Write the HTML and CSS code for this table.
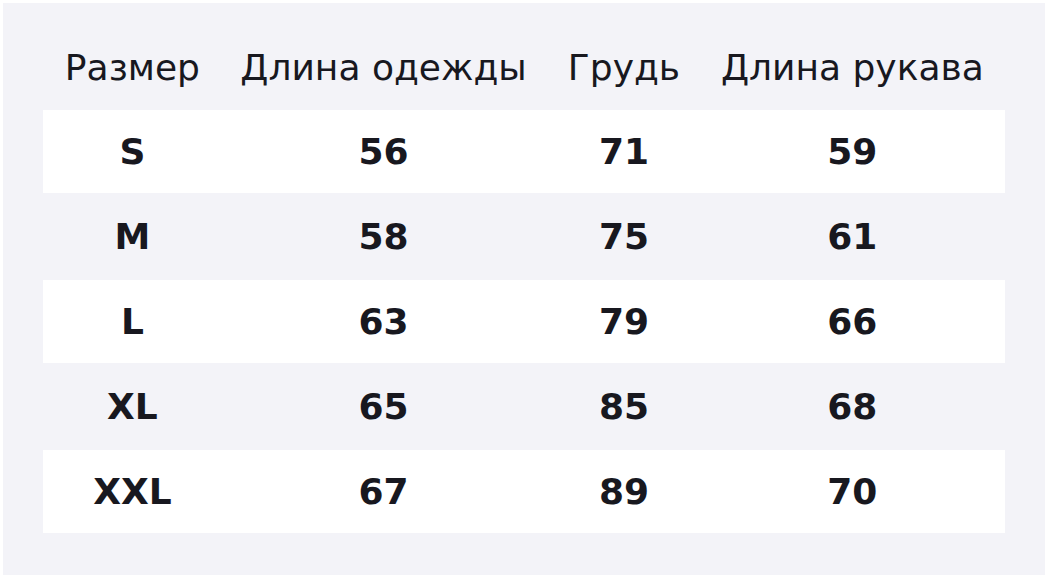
FILE: index.html
```html
<!DOCTYPE html>
<html lang="ru">
<head>
<meta charset="utf-8">
<link rel="stylesheet" href="styles.css">
</head>
<body>
<div class="panel">
  <table class="sizes">
    <thead>
      <tr><th>Размер</th><th>Длина одежды</th><th>Грудь</th><th>Длина рукава</th></tr>
    </thead>
    <tbody>
      <tr class="light"><td>S</td><td>56</td><td>71</td><td>59</td></tr>
      <tr class="dark"><td>M</td><td>58</td><td>75</td><td>61</td></tr>
      <tr class="light"><td>L</td><td>63</td><td>79</td><td>66</td></tr>
      <tr class="dark"><td>XL</td><td>65</td><td>85</td><td>68</td></tr>
      <tr class="light"><td>XXL</td><td>67</td><td>89</td><td>70</td></tr>
    </tbody>
  </table>
</div>
</body>
</html>
```

FILE: styles.css
```css
html, body {
  margin: 0;
  padding: 0;
  background: #ffffff;
}
body {
  width: 1048px;
  height: 578px;
  padding: 3px;
  box-sizing: border-box;
}
.panel {
  width: 1042px;
  height: 572px;
  box-sizing: border-box;
  background: #f3f3f8;
  padding: 21px 40px 0 40px;
}
.sizes {
  width: 962px;
  border-collapse: collapse;
  font-family: "DejaVu Sans", sans-serif;
  color: #18181f;
  font-size: 36px;
}
.sizes th {
  height: 86px;
  font-weight: normal;
  padding: 0 18px;
  white-space: nowrap;
  text-align: center;
  vertical-align: middle;
}
.sizes td {
  font-weight: bold;
  text-align: center;
  vertical-align: middle;
  padding: 0 18px;
}
.sizes th:first-child,
.sizes td:first-child {
  padding: 0 17px 0 20px;
}
.sizes tr.light td {
  background: #ffffff;
  height: 83px;
}
.sizes tr.dark td {
  height: 87px;
}
```
